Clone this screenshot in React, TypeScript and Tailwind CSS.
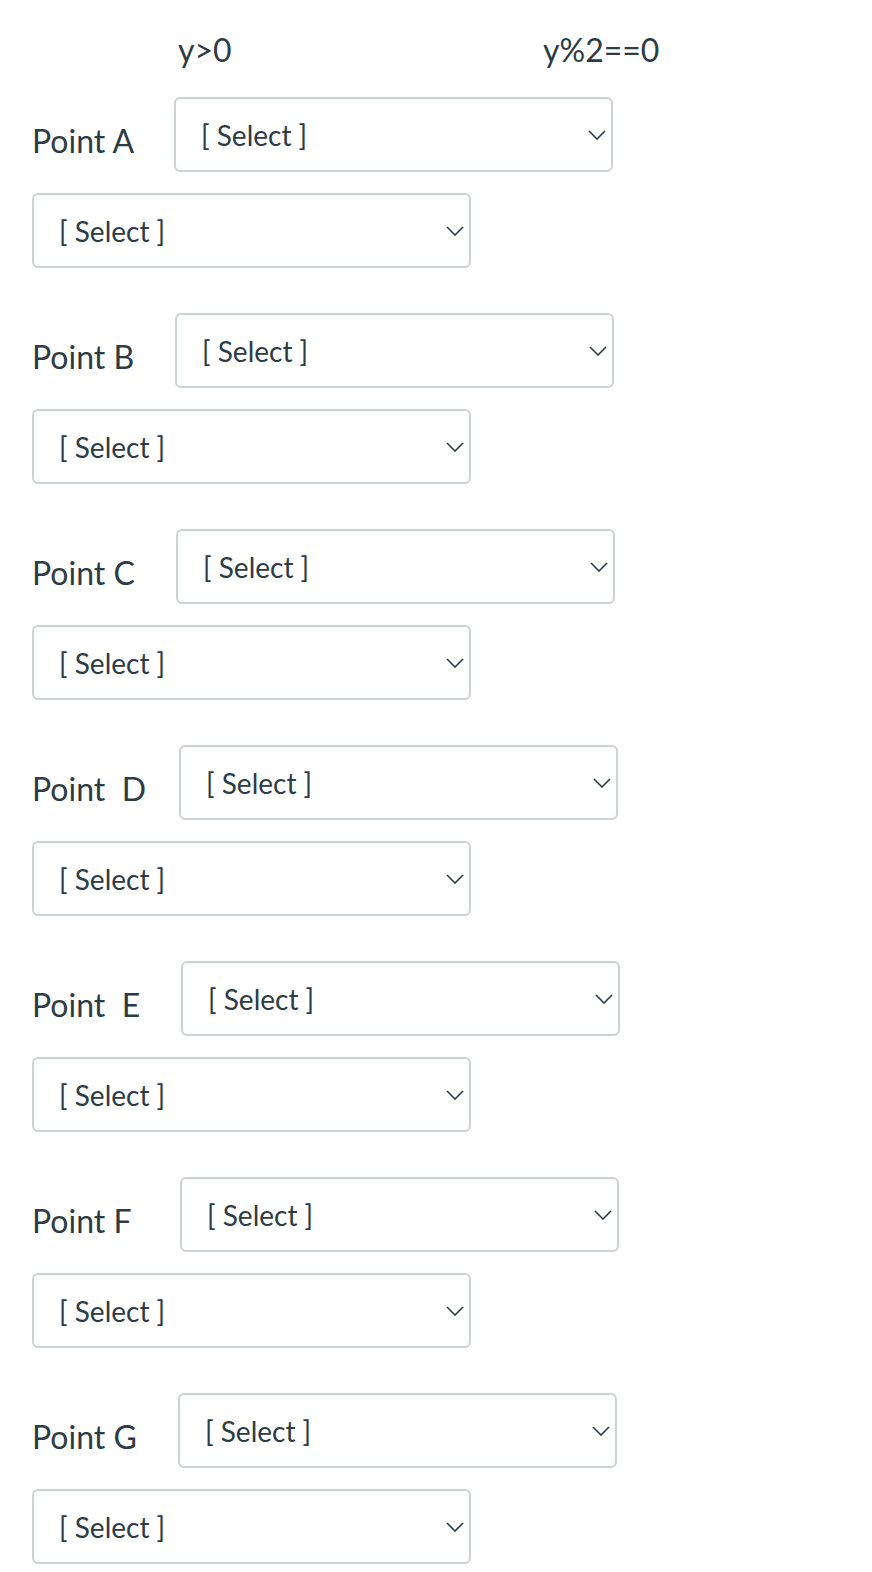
import React from "react";

const rows = [
  { label: "Point A", w: "w-[142px]" },
  { label: "Point B", w: "w-[143px]" },
  { label: "Point C", w: "w-[144px]" },
  { label: "Point\u00a0 D", w: "w-[147px]" },
  { label: "Point\u00a0 E", w: "w-[149px]" },
  { label: "Point F", w: "w-[148px]" },
  { label: "Point G", w: "w-[146px]" },
];

function Select() {
  return (
    <div className="relative w-[439px] h-[75px] shrink-0">
      <select
        className="appearance-none w-full h-full rounded-[6px] border-2 border-[#cdd2d5] bg-white pl-[25px] pr-[40px] text-[28px] text-[#2d3b45] font-['Lato',sans-serif] outline-none"
        defaultValue=""
      >
        <option value="">[ Select ]</option>
      </select>
      <svg
        className="pointer-events-none absolute right-[7px] top-1/2 -translate-y-1/2"
        width="18"
        height="10"
        viewBox="0 0 18 10"
      >
        <path d="M1 1l8 8 8-8" stroke="#2d3b45" strokeWidth="1.6" fill="none" />
      </svg>
    </div>
  );
}

export default function App() {
  return (
    <div className="min-h-screen bg-white text-[#2d3b45] font-['Lato',sans-serif]">
      <div className="pl-[32px]">
        <div className="h-[97px] pt-[31px] flex text-[32px] leading-[38px]">
          <span className="ml-[146px] w-[365px]">y&gt;0</span>
          <span>y%2==0</span>
        </div>
        {rows.map((r) => (
          <div key={r.label} className="pb-[45px]">
            <div className="flex items-start h-[75px]">
              <div className={`${r.w} shrink-0 pt-[25px] text-[32px] leading-[38px] whitespace-nowrap`}>
                {r.label}
              </div>
              <Select />
            </div>
            <div className="mt-[21px]">
              <Select />
            </div>
          </div>
        ))}
      </div>
    </div>
  );
}
